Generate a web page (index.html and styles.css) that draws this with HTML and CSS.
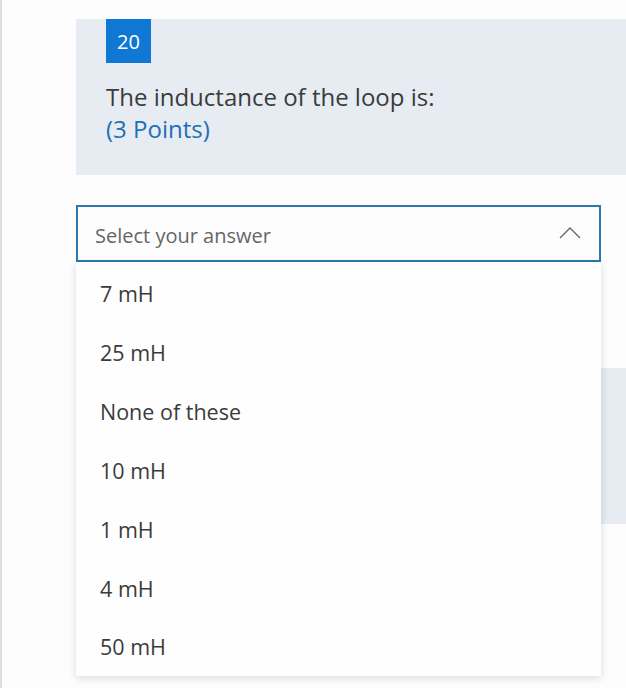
FILE: index.html
```html
<!DOCTYPE html>
<html lang="en">
<head>
    <meta charset="UTF-8">
    <meta name="viewport" content="width=device-width, initial-scale=1.0">
    <title>Question 20</title>
    <link rel="stylesheet" href="styles.css">
</head>
<body>

    <div class="page">
        <div class="question">
            <div class="question-number">20</div>
            <div class="question-title">The inductance of the loop is:</div>
            <div class="question-points">(3 Points)</div>
        </div>

        <div class="answer">
            <div class="select open">
                <span class="placeholder">Select your answer</span>
                <svg class="chevron" width="22" height="12" viewBox="0 0 22 12">
                    <polyline points="1,11 11,1 21,11" fill="none" stroke="#666" stroke-width="1.3"/>
                </svg>
            </div>

            <ul class="options">
                <li>7 mH</li>
                <li>25 mH</li>
                <li>None of these</li>
                <li>10 mH</li>
                <li>1 mH</li>
                <li>4 mH</li>
                <li>50 mH</li>
            </ul>
        </div>

        <div class="question next"></div>
    </div>

</body>
</html>
```

FILE: styles.css
```css
body {
    font-family: 'Open Sans', 'Noto Sans', sans-serif;
    background-color: #fdfdfd;
    color: #333;
    margin: 0;
    padding: 0;
}
.page {
    min-height: 688px;
    border-left: 2px solid #d9e0e6;
    padding: 19px 0 0 74px;
    box-sizing: border-box;
    overflow: hidden;
}
.question {
    background-color: #e6ecf2;
    padding: 0 30px 30px 30px;
    height: 156px;
    box-sizing: border-box;
}
.question-number {
    width: 45px;
    height: 44px;
    background-color: #0f78d4;
    color: #fff;
    font-size: 20px;
    display: flex;
    align-items: center;
    justify-content: center;
}
.question-title {
    margin-top: 18px;
    font-size: 24px;
    line-height: 32px;
    color: #3b3b3b;
}
.question-points {
    font-size: 24px;
    line-height: 32px;
    color: #2170b6;
}
.answer {
    position: relative;
    margin-top: 30px;
    width: 525px;
}
.select {
    height: 57px;
    border: 2px solid #2a7aae;
    box-sizing: border-box;
    background-color: #fdfdfd;
    display: flex;
    align-items: center;
    justify-content: space-between;
    padding: 3px 18px 0 17px;
}
.chevron {
    margin-top: -4px;
}
.placeholder {
    font-size: 20px;
    color: #666;
}
.options {
    position: absolute;
    top: 57px;
    left: 0;
    right: 0;
    margin: 0;
    padding: 2px 0 0 0;
    list-style: none;
    background-color: #fefefe;
    box-shadow: 0 2px 8px rgba(0, 0, 0, 0.14);
    z-index: 2;
}
.options li {
    height: 59px;
    line-height: 59px;
    padding-left: 24px;
    font-size: 21.5px;
    color: #3b3b3b;
}
.options li:last-child {
    height: 58px;
    line-height: 58px;
}
.next {
    margin-top: 106px;
}
```
